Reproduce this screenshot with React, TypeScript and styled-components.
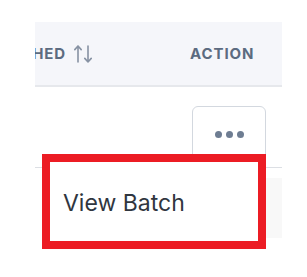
import * as React from 'react';
import styled, { createGlobalStyle } from 'styled-components';

const GlobalStyle = createGlobalStyle`
    body {
        margin: 0;
        background: #ffffff;
        font-family: Inter, "Noto Sans", sans-serif;
    }
`;

const Page = styled.div`
    position: relative;
    width: 307px;
    height: 277px;
    overflow: hidden;
    padding: 22px 25px 0 35px;
    box-sizing: border-box;
`;

const TableClip = styled.div`
    width: 247px;
    overflow: hidden;
`;

const HeaderRow = styled.div`
    display: flex;
    justify-content: flex-end;
    align-items: center;
    height: 63px;
    background-color: #f5f6fa;
    border-bottom: 2px solid #e6e8ec;
`;

const HeadLabel = styled.div<{ $gap?: number }>`
    display: flex;
    align-items: center;
    flex-shrink: 0;
    gap: 8px;
    padding-right: ${(p) => p.$gap || 0}px;
    color: #5c6b80;
    font-size: 15px;
    font-weight: 700;
    letter-spacing: 0.9px;
    white-space: nowrap;
`;

const ActionCol = styled.div`
    width: 92px;
    flex-shrink: 0;
`;

const BodyRow = styled.div`
    display: flex;
    justify-content: flex-end;
    align-items: flex-start;
    height: 81px;
    border-bottom: 1px solid #dcdfe4;
    box-sizing: border-box;
`;

const RowActions = styled(ActionCol)`
    padding-top: 19px;
    padding-left: 2px;
    box-sizing: border-box;
`;

const MoreButton = styled.button`
    width: 74px;
    height: 59px;
    display: flex;
    align-items: center;
    justify-content: center;
    gap: 4px;
    padding: 0 0 2px;
    background: #ffffff;
    border: 1px solid #d3d8df;
    border-radius: 6px;
`;

const Dot = styled.span`
    width: 7px;
    height: 7px;
    border-radius: 50%;
    background-color: #6e7d92;
`;

const MenuPanel = styled.div`
    position: absolute;
    left: 50px;
    top: 178px;
    width: 232px;
    height: 60px;
    background-color: #f8f8f8;
`;

const MenuItem = styled.div`
    position: absolute;
    left: 42px;
    top: 154px;
    width: 224px;
    height: 95px;
    box-sizing: border-box;
    border: 8px solid #ec1c24;
    background-color: #ffffff;
    display: flex;
    align-items: center;
    padding: 3px 0 0 13px;
    color: #30363f;
    font-size: 23px;
    font-weight: 400;
`;

const SortArrows = () => (
    <svg width="19" height="18" viewBox="0 0 19 18" fill="none" stroke="#8792a3" strokeWidth="1.6" strokeLinecap="round" strokeLinejoin="round">
        <path d="M4 17V1M0.8 4.6L4 1l3.2 3.6" />
        <path d="M14 1v16M10.8 13.4L14 17l3.2-3.6" />
    </svg>
);

export default class App extends React.Component {
    render() {
        return (
            <Page>
                <GlobalStyle />
                <TableClip>
                    <HeaderRow>
                        <HeadLabel $gap={97}>
                            PUBLISHED
                            <SortArrows />
                        </HeadLabel>
                        <ActionCol>
                            <HeadLabel>ACTION</HeadLabel>
                        </ActionCol>
                    </HeaderRow>
                    <BodyRow>
                        <RowActions>
                            <MoreButton>
                                <Dot />
                                <Dot />
                                <Dot />
                            </MoreButton>
                        </RowActions>
                    </BodyRow>
                </TableClip>
                <MenuPanel />
                <MenuItem>View Batch</MenuItem>
            </Page>
        );
    }
}
